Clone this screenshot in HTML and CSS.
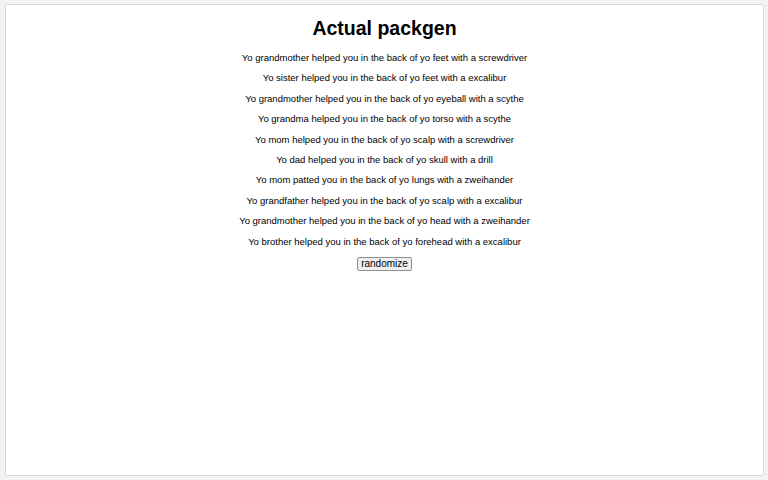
FILE: index.html
```html
<!DOCTYPE html>
<html>
<head>
    <title>Actual packgen</title>
    <link rel="stylesheet" href="styles.css">
</head>
<body>
    <div id="packgen">
        <h1>Actual packgen</h1>
        <div id="lines">
            <p>Yo grandmother helped you in the back of yo feet with a screwdriver</p>
            <p>Yo sister helped you in the back of yo feet with a excalibur</p>
            <p>Yo grandmother helped you in the back of yo eyeball with a scythe</p>
            <p>Yo grandma helped you in the back of yo torso with a scythe</p>
            <p>Yo mom helped you in the back of yo scalp with a screwdriver</p>
            <p>Yo dad helped you in the back of yo skull with a drill</p>
            <p>Yo mom patted you in the back of yo lungs with a zweihander</p>
            <p>Yo grandfather helped you in the back of yo scalp with a excalibur</p>
            <p>Yo grandmother helped you in the back of yo head with a zweihander</p>
            <p>Yo brother helped you in the back of yo forehead with a excalibur</p>
        </div>
        <button onclick="randomize()">randomize</button>
    </div>

<script>
        var people = ['mom', 'dad', 'sister', 'brother', 'grandma', 'grandmother', 'grandfather'];
        var verbs = ['helped', 'helped', 'helped', 'patted'];
        var parts = ['feet', 'eyeball', 'torso', 'scalp', 'skull', 'lungs', 'head', 'forehead'];
        var things = ['screwdriver', 'excalibur', 'scythe', 'drill', 'zweihander'];

        function pick(list) {
            return list[Math.floor(Math.random() * list.length)];
        }

        function randomize() {
            var lines = document.querySelectorAll('#lines p');
            for (var i = 0; i < lines.length; i++) {
                lines[i].textContent = 'Yo ' + pick(people) + ' ' + pick(verbs) + ' you in the back of yo ' + pick(parts) + ' with a ' + pick(things);
            }
        }
    </script>
</body>
</html>
```

FILE: styles.css
```css
body {
    font-family: "Liberation Sans", Arial, sans-serif;
    background-color: #f2f2f2;
    margin: 0;
    padding: 4px 4px 4px 5px;
    height: 100vh;
    box-sizing: border-box;
}

#packgen {
    background-color: #fff;
    border: 1px solid #d6d6d6;
    border-radius: 2px;
    height: 100%;
    box-sizing: border-box;
    text-align: center;
    padding-top: 12px;
}

#packgen h1 {
    font-size: 19.5px;
    margin: 0 0 8px 0;
}

#lines p {
    font-size: 9.5px;
    margin: 0;
    line-height: 20.4px;
}

#packgen button {
    font-family: "Liberation Sans", Arial, sans-serif;
    font-size: 10px;
    margin-top: 5px;
    padding: 0 3px;
    height: 14px;
    line-height: 12px;
    border: 1px solid #8f8f8f;
    border-radius: 2px;
    background-color: #efefef;
}
```
